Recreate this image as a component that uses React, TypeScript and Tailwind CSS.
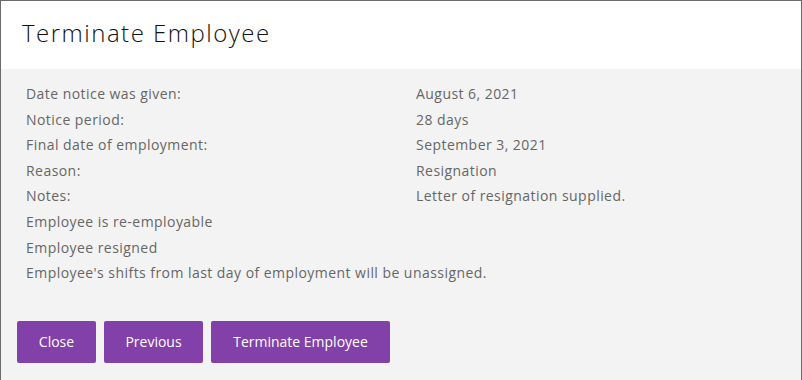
import React from "react";

const rows: [string, string][] = [
  ["Date notice was given:", "August 6, 2021"],
  ["Notice period:", "28 days"],
  ["Final date of employment:", "September 3, 2021"],
  ["Reason:", "Resignation"],
  ["Notes:", "Letter of resignation supplied."],
];

const lines = [
  "Employee is re-employable",
  "Employee resigned",
  "Employee's shifts from last day of employment will be unassigned.",
];

export default function App() {
  return (
    <div
      className="w-[802px] h-[380px] bg-[#f3f3f3] border-l border-t border-r border-[#6b6b6b] flex flex-col overflow-hidden"
      style={{ fontFamily: "'Open Sans', Lato, sans-serif" }}
    >
      <div className="bg-white h-[68px] shrink-0 flex items-center pl-[21px]">
        <h1 className="text-[24px] font-light text-[#111111] tracking-[1.5px] pb-[5px]">Terminate Employee</h1>
      </div>
      <div className="pt-[12px] pl-[25px] text-[14px] leading-[25.6px] text-[#666666] tracking-[0.45px]">
        {rows.map(([l, v]) => (
          <div key={l} className="grid grid-cols-[390px_1fr]">
            <div>{l}</div>
            <div>{v}</div>
          </div>
        ))}
        {lines.map((l) => (
          <div key={l}>{l}</div>
        ))}
      </div>
      <div className="flex gap-[8px] pl-[16px] mt-[35px]">
        <button className="w-[79px] h-[42px] rounded-[2px] bg-[#8240a9] text-white text-[14px] font-medium">Close</button>
        <button className="w-[99px] h-[42px] rounded-[2px] bg-[#8240a9] text-white text-[14px] font-medium">Previous</button>
        <button className="w-[179px] h-[42px] rounded-[2px] bg-[#8240a9] text-white text-[14px] font-medium">Terminate Employee</button>
      </div>
    </div>
  );
}
